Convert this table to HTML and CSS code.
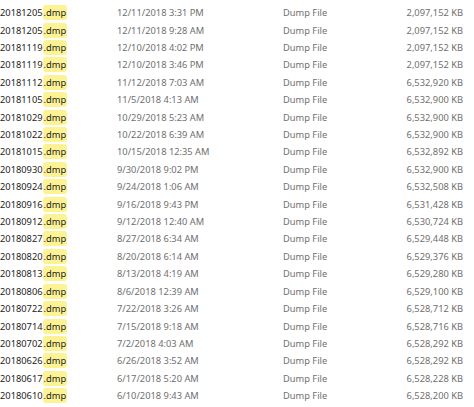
FILE: index.html
```html
<!DOCTYPE html>
<html>
<head>
<meta charset="utf-8">
<link rel="stylesheet" href="styles.css">
</head>
<body>
<div class="list">
  <div class="row"><span class="name">20181205<span class="ext">.dmp</span></span><span class="date">12/11/2018 3:31 PM</span><span class="type">Dump File</span><span class="size">2,097,152 KB</span></div>
  <div class="row"><span class="name">20181205<span class="ext">.dmp</span></span><span class="date">12/11/2018 9:28 AM</span><span class="type">Dump File</span><span class="size">2,097,152 KB</span></div>
  <div class="row"><span class="name">20181119<span class="ext">.dmp</span></span><span class="date">12/10/2018 4:02 PM</span><span class="type">Dump File</span><span class="size">2,097,152 KB</span></div>
  <div class="row"><span class="name">20181119<span class="ext">.dmp</span></span><span class="date">12/10/2018 3:46 PM</span><span class="type">Dump File</span><span class="size">2,097,152 KB</span></div>
  <div class="row"><span class="name">20181112<span class="ext">.dmp</span></span><span class="date">11/12/2018 7:03 AM</span><span class="type">Dump File</span><span class="size">6,532,920 KB</span></div>
  <div class="row"><span class="name">20181105<span class="ext">.dmp</span></span><span class="date">11/5/2018 4:13 AM</span><span class="type">Dump File</span><span class="size">6,532,900 KB</span></div>
  <div class="row"><span class="name">20181029<span class="ext">.dmp</span></span><span class="date">10/29/2018 5:23 AM</span><span class="type">Dump File</span><span class="size">6,532,900 KB</span></div>
  <div class="row"><span class="name">20181022<span class="ext">.dmp</span></span><span class="date">10/22/2018 6:39 AM</span><span class="type">Dump File</span><span class="size">6,532,900 KB</span></div>
  <div class="row"><span class="name">20181015<span class="ext">.dmp</span></span><span class="date">10/15/2018 12:35 AM</span><span class="type">Dump File</span><span class="size">6,532,892 KB</span></div>
  <div class="row"><span class="name">20180930<span class="ext">.dmp</span></span><span class="date">9/30/2018 9:02 PM</span><span class="type">Dump File</span><span class="size">6,532,900 KB</span></div>
  <div class="row"><span class="name">20180924<span class="ext">.dmp</span></span><span class="date">9/24/2018 1:06 AM</span><span class="type">Dump File</span><span class="size">6,532,508 KB</span></div>
  <div class="row"><span class="name">20180916<span class="ext">.dmp</span></span><span class="date">9/16/2018 9:43 PM</span><span class="type">Dump File</span><span class="size">6,531,428 KB</span></div>
  <div class="row"><span class="name">20180912<span class="ext">.dmp</span></span><span class="date">9/12/2018 12:40 AM</span><span class="type">Dump File</span><span class="size">6,530,724 KB</span></div>
  <div class="row"><span class="name">20180827<span class="ext">.dmp</span></span><span class="date">8/27/2018 6:34 AM</span><span class="type">Dump File</span><span class="size">6,529,448 KB</span></div>
  <div class="row"><span class="name">20180820<span class="ext">.dmp</span></span><span class="date">8/20/2018 6:14 AM</span><span class="type">Dump File</span><span class="size">6,529,376 KB</span></div>
  <div class="row"><span class="name">20180813<span class="ext">.dmp</span></span><span class="date">8/13/2018 4:19 AM</span><span class="type">Dump File</span><span class="size">6,529,280 KB</span></div>
  <div class="row"><span class="name">20180806<span class="ext">.dmp</span></span><span class="date">8/6/2018 12:39 AM</span><span class="type">Dump File</span><span class="size">6,529,100 KB</span></div>
  <div class="row"><span class="name">20180722<span class="ext">.dmp</span></span><span class="date">7/22/2018 3:26 AM</span><span class="type">Dump File</span><span class="size">6,528,712 KB</span></div>
  <div class="row"><span class="name">20180714<span class="ext">.dmp</span></span><span class="date">7/15/2018 9:18 AM</span><span class="type">Dump File</span><span class="size">6,528,716 KB</span></div>
  <div class="row"><span class="name">20180702<span class="ext">.dmp</span></span><span class="date">7/2/2018 4:03 AM</span><span class="type">Dump File</span><span class="size">6,528,292 KB</span></div>
  <div class="row"><span class="name">20180626<span class="ext">.dmp</span></span><span class="date">6/26/2018 3:52 AM</span><span class="type">Dump File</span><span class="size">6,528,292 KB</span></div>
  <div class="row"><span class="name">20180617<span class="ext">.dmp</span></span><span class="date">6/17/2018 5:20 AM</span><span class="type">Dump File</span><span class="size">6,528,228 KB</span></div>
  <div class="row"><span class="name">20180610<span class="ext">.dmp</span></span><span class="date">6/10/2018 9:43 AM</span><span class="type">Dump File</span><span class="size">6,528,200 KB</span></div>
</div>
</body>
</html>
```
FILE: styles.css
```css
html, body {
  margin: 0;
  padding: 0;
  background: #ffffff;
}
.list {
  padding-top: 4px;
  font-family: "Noto Sans", "Open Sans", sans-serif;
  font-size: 9.3px;
}
.row {
  display: grid;
  grid-template-columns: 117px 166px 1fr 100px;
  height: 17.42px;
  align-items: center;
  padding-right: 11px;
  white-space: nowrap;
}
.name {
  color: #1e1e1e;
}
.ext {
  background: #fdf394;
  border-radius: 3px;
  padding: 1px 1px;
}
.date, .type, .size {
  color: #6f6f6f;
}
.size {
  text-align: right;
}
```
